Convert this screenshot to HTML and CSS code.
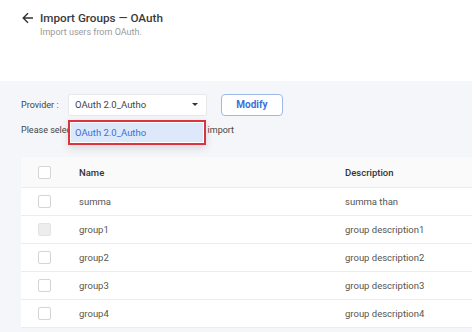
FILE: index.html
```html
<!DOCTYPE html>
<html lang="en">
<head>
    <meta charset="UTF-8">
    <title>Import Groups — OAuth</title>
    <link rel="stylesheet" href="styles.css">
</head>
<body>
    <div class="page-header">
        <div class="title-row">
            <svg class="back-icon" width="12" height="12" viewBox="0 0 12 12">
                <path d="M11 6H1.5M6 1.2L1.2 6L6 10.8" fill="none" stroke="#333" stroke-width="1.4"/>
            </svg>
            <h1>Import Groups — OAuth</h1>
        </div>
        <div class="subtitle">Import users from OAuth.</div>
    </div>

    <div class="panel">
        <div class="toolbar">
            <span class="field-label">Provider :</span>
            <div class="select-wrap">
                <div class="select-box">
                    <span>OAuth 2.0_Autho</span>
                    <span class="caret"></span>
                </div>
                <div class="dropdown">
                    <div class="dropdown-item">OAuth 2.0_Autho</div>
                </div>
            </div>
            <button type="button" class="btn-modify">Modify</button>
        </div>
        <div class="hint">Please select the user groups that you want to import</div>

        <div class="table-card">
            <div class="row head">
                <div class="cell check"><span class="checkbox"></span></div>
                <div class="cell name">Name</div>
                <div class="cell desc">Description</div>
            </div>
            <div class="row">
                <div class="cell check"><span class="checkbox"></span></div>
                <div class="cell name">summa</div>
                <div class="cell desc">summa than</div>
            </div>
            <div class="row">
                <div class="cell check"><span class="checkbox disabled"></span></div>
                <div class="cell name">group1</div>
                <div class="cell desc">group description1</div>
            </div>
            <div class="row">
                <div class="cell check"><span class="checkbox"></span></div>
                <div class="cell name">group2</div>
                <div class="cell desc">group description2</div>
            </div>
            <div class="row">
                <div class="cell check"><span class="checkbox"></span></div>
                <div class="cell name">group3</div>
                <div class="cell desc">group description3</div>
            </div>
            <div class="row">
                <div class="cell check"><span class="checkbox"></span></div>
                <div class="cell name">group4</div>
                <div class="cell desc">group description4</div>
            </div>
        </div>
    </div>
</body>
</html>
```

FILE: styles.css
```css
body {
    font-family: Roboto, "Liberation Sans", sans-serif;
    background-color: #fff;
    color: #333;
    margin: 0;
    padding: 0;
}

.page-header {
    height: 81px;
    box-sizing: border-box;
    padding: 10px 0 0 22px;
}
.title-row {
    display: flex;
    align-items: center;
    gap: 6px;
}
.back-icon {
    flex-shrink: 0;
}
h1 {
    margin: 0;
    font-size: 11.7px;
    font-weight: 500;
    color: #3a3a3a;
    line-height: 16px;
}
.subtitle {
    margin: 1px 0 0 18px;
    font-size: 9px;
    color: #9a9a9a;
}

.panel {
    width: 472px;
    background-color: #f4f6f9;
    padding: 12px 0 0 21px;
    box-sizing: border-box;
    height: 251px;
}
.toolbar {
    display: flex;
    align-items: center;
    height: 23px;
}
.field-label {
    font-size: 9px;
    color: #444;
    width: 47px;
}
.select-wrap {
    position: relative;
}
.select-box {
    width: 139px;
    height: 22px;
    box-sizing: border-box;
    background-color: #fff;
    border: 1px solid #e6e8eb;
    border-radius: 2px;
    display: flex;
    align-items: center;
    justify-content: space-between;
    padding: 0 8px 0 6px;
    font-size: 9.5px;
    color: #444;
}
.caret {
    width: 0;
    height: 0;
    border-left: 3px solid transparent;
    border-right: 3px solid transparent;
    border-top: 3px solid #333;
}
.dropdown {
    position: absolute;
    top: 26px;
    left: 0;
    width: 138px;
    height: 25px;
    box-sizing: border-box;
    background-color: #fff;
    border: 2px solid #d9343f;
    box-shadow: 0 3px 8px rgba(0, 0, 0, 0.12);
    padding: 1px;
    z-index: 2;
}
.dropdown-item {
    height: 100%;
    background-color: #dde9fb;
    color: #3a70d8;
    font-size: 9.5px;
    display: flex;
    align-items: center;
    padding-left: 4px;
}
.btn-modify {
    margin-left: 14px;
    width: 62px;
    height: 22px;
    background-color: #fff;
    border: 1px solid #9db8ea;
    border-radius: 4px;
    color: #3d6fd8;
    font-family: inherit;
    font-size: 10px;
    font-weight: 700;
    padding: 0;
}
.hint {
    margin-top: 7px;
    font-size: 9px;
    color: #444;
    line-height: 14px;
}

.table-card {
    margin-top: 20px;
    width: 451px;
    background-color: #fff;
}
.row {
    display: flex;
    align-items: center;
    height: 28px;
    border-bottom: 1px solid #ececec;
    box-sizing: border-box;
    font-size: 9.5px;
    color: #555;
}
.row.head {
    height: 31px;
    background-color: #fafafa;
    color: #333;
    font-weight: 500;
}
.cell.check {
    width: 58px;
    padding-left: 17px;
    box-sizing: border-box;
    display: flex;
}
.cell.name {
    width: 266px;
}
.checkbox {
    width: 11px;
    height: 11px;
    border: 1px solid #d4d4d4;
    border-radius: 2px;
    background-color: #fff;
}
.checkbox.disabled {
    background-color: #ededed;
    border-color: #e3e3e3;
}
```
